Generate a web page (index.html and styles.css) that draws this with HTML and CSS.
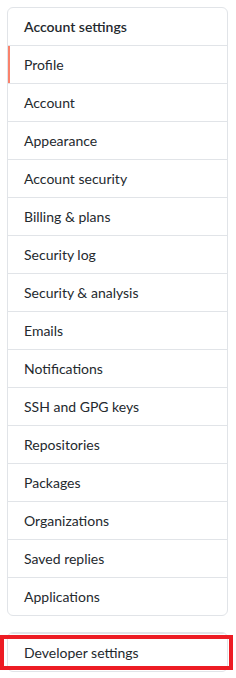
FILE: index.html
```html
<!DOCTYPE html>
<html lang="en">
<head>
  <meta charset="UTF-8" />
  <meta name="viewport" content="width=device-width, initial-scale=1.0"/>
  <title>Settings</title>
  <link rel="stylesheet" href="styles.css">
</head>
<body>

  <div class="page">
    <nav class="menu">
      <div class="menu-heading">Account settings</div>
      <a class="menu-item selected" href="#">Profile</a>
      <a class="menu-item" href="#">Account</a>
      <a class="menu-item" href="#">Appearance</a>
      <a class="menu-item" href="#">Account security</a>
      <a class="menu-item" href="#">Billing &amp; plans</a>
      <a class="menu-item" href="#">Security log</a>
      <a class="menu-item" href="#">Security &amp; analysis</a>
      <a class="menu-item" href="#">Emails</a>
      <a class="menu-item" href="#">Notifications</a>
      <a class="menu-item" href="#">SSH and GPG keys</a>
      <a class="menu-item" href="#">Repositories</a>
      <a class="menu-item" href="#">Packages</a>
      <a class="menu-item" href="#">Organizations</a>
      <a class="menu-item" href="#">Saved replies</a>
      <a class="menu-item" href="#">Applications</a>
    </nav>

    <div class="dev-wrap">
      <nav class="menu">
        <a class="menu-item" href="#">Developer settings</a>
      </nav>
      <div class="highlight"></div>
    </div>
  </div>

</body>
</html>
```

FILE: styles.css
```css
body {
  font-family: 'Segoe UI', Lato, sans-serif;
  margin: 0;
  padding: 0;
  background: #fff;
  color: #24292e;
}

.page {
  padding: 7px 8px 0 7px;
}

.menu {
  border: 1px solid #e1e4e8;
  border-radius: 6px;
  overflow: hidden;
}

.menu-heading,
.menu-item {
  display: flex;
  align-items: center;
  height: 37px;
  padding-left: 16px;
  font-size: 14px;
  border-top: 1px solid #e1e4e8;
  text-decoration: none;
  color: #24292e;
}

.menu-heading {
  border-top: none;
  font-weight: 600;
}

.menu-item.selected {
  box-shadow: inset 2px 0 0 #f9826c;
}

.dev-wrap {
  position: relative;
  margin-top: 16px;
}

.highlight {
  position: absolute;
  top: 3px;
  left: -7px;
  right: -5px;
  height: 27px;
  border: 4px solid #ed1c24;
}
```
